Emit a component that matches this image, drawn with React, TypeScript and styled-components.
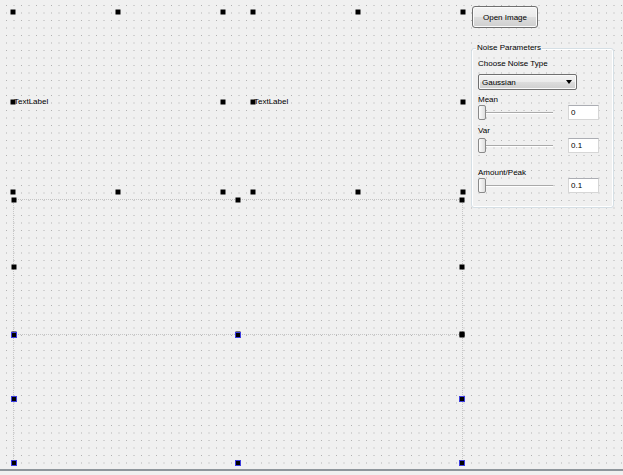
import React from "react";
import styled, { createGlobalStyle } from "styled-components";

type Tone = "black" | "blue";

const GlobalStyle = createGlobalStyle`
  html, body {
    margin: 0;
    padding: 0;
    background: #f0f0f0;
  }
  body {
    font-family: "Liberation Sans", Arial, sans-serif;
    font-size: 8px;
    color: #000;
  }
`;

const dot = "radial-gradient(circle at 0.5px 0.5px, #b0b0b0 0, #b0b0b0 0.7px, transparent 0.8px)";

const Canvas = styled.div`
  box-sizing: border-box;
  width: 623px;
  height: 471px;
  border-bottom: 2px solid #8e959b;
  background-color: #f0f0f0;
  background-image: ${dot}, ${dot}, ${dot}, ${dot};
  background-size: 15px 15px;
  background-position: 6px 5px, 13.5px 5px, 6px 12.5px, 13.5px 12.5px;
  display: flex;
  align-items: flex-start;
  padding: 6px 0 0 13px;
  gap: 8px;
`;

const LeftColumn = styled.div`
  width: 450px;
  margin-top: 6px;
  display: flex;
  flex-direction: column;
`;

const TopRow = styled.div`
  display: flex;
  gap: 30px;
  height: 180px;
`;

const LabelCell = styled.div`
  position: relative;
  width: 210px;
  height: 180px;
  display: flex;
  align-items: center;
  padding-left: 1px;
  line-height: 10px;
`;

const LayoutArea = styled.div`
  margin-top: 7px;
  display: flex;
  flex-direction: column;
`;

const Pane = styled.div<{ $h: number }>`
  position: relative;
  box-sizing: border-box;
  height: ${(p) => p.$h}px;
  border-top: 1px dotted #c6c6c6;
  border-left: 1px dotted #c6c6c6;
  border-right: 1px dotted #c6c6c6;
`;

const Handle = styled.span<{ $x: string; $y: string; $tone: Tone }>`
  position: absolute;
  left: ${(p) => p.$x};
  top: ${(p) => p.$y};
  transform: translate(-50%, -50%);
  box-sizing: border-box;
  width: ${(p) => (p.$tone === "blue" ? 6 : 5)}px;
  height: ${(p) => (p.$tone === "blue" ? 6 : 5)}px;
  background: #000;
  border: ${(p) => (p.$tone === "blue" ? "1px solid #3c3ce0" : "none")};
  z-index: ${(p) => (p.$tone === "blue" ? 3 : 2)};
`;

const spots: [string, string][] = [
  ["0", "0"], ["50%", "0"], ["100%", "0"],
  ["0", "50%"], ["100%", "50%"],
  ["0", "100%"], ["50%", "100%"], ["100%", "100%"],
];

// tone for each handle; `plain` lists spots that stay black (drawn by a neighbour)
const Handles: React.FC<{ tone?: Tone; plain?: string[] }> = ({ tone = "black", plain = [] }) => (
  <>
    {spots.map(([x, y]) => (
      <Handle key={x + y} $x={x} $y={y} $tone={plain.includes(x + y) ? "black" : tone} />
    ))}
  </>
);

const RightColumn = styled.div`
  width: 143px;
  display: flex;
  flex-direction: column;
`;

const PushButton = styled.button`
  box-sizing: border-box;
  margin-left: 1px;
  width: 66px;
  height: 22px;
  padding: 0;
  font: inherit;
  color: #000;
  border: 1px solid #707070;
  border-radius: 3px;
  background: linear-gradient(#f3f3f3 0%, #ebebeb 48%, #dddddd 52%, #cfcfcf 100%);
  box-shadow: inset 0 0 0 1px #fbfbfb;
`;

const GroupBox = styled.div`
  box-sizing: border-box;
  margin-top: 20px;
  width: 143px;
  height: 160px;
  border: 1px solid #d5dfe5;
  border-radius: 3px;
  box-shadow: inset 0 0 0 1px #ffffff;
  padding-left: 6px;
  display: flex;
  flex-direction: column;
  align-items: flex-start;
`;

const GroupTitle = styled.div`
  margin: -6px 0 0 -2px;
  padding: 0 1px;
  line-height: 10px;
  background: #f0f0f0;
`;

const FieldLabel = styled.div<{ $gap: number }>`
  margin-top: ${(p) => p.$gap}px;
  line-height: 10px;
`;

const Combo = styled.div`
  box-sizing: border-box;
  margin-top: 5px;
  width: 99px;
  height: 16px;
  display: flex;
  align-items: center;
  padding: 0 4px 0 3px;
  border: 1px solid #707070;
  border-radius: 2px;
  background: linear-gradient(#f2f2f2 0%, #ebebeb 48%, #dddddd 52%, #cfcfcf 100%);
  box-shadow: inset 0 0 0 1px #fafafa;
`;

const ComboArrow = styled.span`
  margin-left: auto;
  width: 0;
  height: 0;
  border-left: 3px solid transparent;
  border-right: 3px solid transparent;
  border-top: 4px solid #000;
`;

const SliderRow = styled.div<{ $gap: number }>`
  margin-top: ${(p) => p.$gap}px;
  display: flex;
  align-items: center;
`;

const SliderTrack = styled.div`
  width: 75px;
  height: 15px;
  display: flex;
  align-items: center;
  background: linear-gradient(
    to bottom,
    transparent 7px,
    #a9a9a9 7px,
    #a9a9a9 8px,
    #ffffff 8px,
    #ffffff 9px,
    transparent 9px
  );
`;

const SliderKnob = styled.span`
  box-sizing: border-box;
  width: 8px;
  height: 15px;
  border: 1px solid #8a8a8a;
  border-radius: 2px;
  background: linear-gradient(to right, #fdfdfd, #dedede);
`;

const LineEdit = styled.div`
  box-sizing: border-box;
  margin-left: 15px;
  width: 31px;
  height: 15px;
  padding-left: 2px;
  line-height: 13px;
  background: #ffffff;
  border: 1px solid #d6d6d6;
  border-top-color: #abadb3;
`;

const params = [
  { label: "Mean", labelGap: 5, rowGap: 0, value: "0" },
  { label: "Var", labelGap: 6, rowGap: 2, value: "0.1" },
  { label: "Amount/Peak", labelGap: 15, rowGap: 0, value: "0.1" },
];

export default function App() {
  return (
    <>
      <GlobalStyle />
      <Canvas>
        <LeftColumn>
          <TopRow>
            <LabelCell>
              TextLabel
              <Handles />
            </LabelCell>
            <LabelCell>
              TextLabel
              <Handles />
            </LabelCell>
          </TopRow>
          <LayoutArea>
            <Pane $h={135}>
              <Handles />
            </Pane>
            <Pane $h={129}>
              <Handles tone="blue" plain={["100%0"]} />
            </Pane>
          </LayoutArea>
        </LeftColumn>
        <RightColumn>
          <PushButton>Open Image</PushButton>
          <GroupBox>
            <GroupTitle>Noise Parameters</GroupTitle>
            <FieldLabel $gap={6}>Choose Noise Type</FieldLabel>
            <Combo>
              Gaussian
              <ComboArrow />
            </Combo>
            {params.map((p) => (
              <React.Fragment key={p.label}>
                <FieldLabel $gap={p.labelGap}>{p.label}</FieldLabel>
                <SliderRow $gap={p.rowGap}>
                  <SliderTrack>
                    <SliderKnob />
                  </SliderTrack>
                  <LineEdit>{p.value}</LineEdit>
                </SliderRow>
              </React.Fragment>
            ))}
          </GroupBox>
        </RightColumn>
      </Canvas>
    </>
  );
}
